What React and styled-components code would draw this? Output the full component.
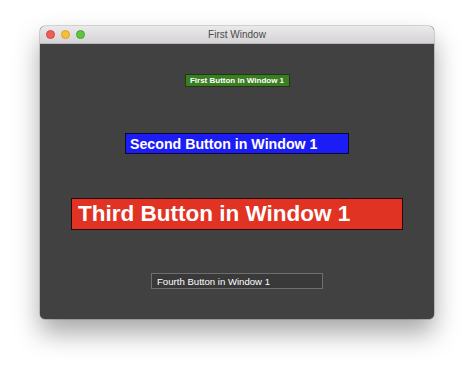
import React from "react";
import styled, { createGlobalStyle } from "styled-components";

const GlobalStyle = createGlobalStyle`
  html, body {
    margin: 0;
    padding: 0;
    background: #ffffff;
    font-family: "Liberation Sans", Arial, sans-serif;
  }
`;

const buttons = [
  { label: "First Button in Window 1", kind: "green" },
  { label: "Second Button in Window 1", kind: "blue" },
  { label: "Third Button in Window 1", kind: "red" },
  { label: "Fourth Button in Window 1", kind: "plain" },
];

export default function App() {
  return (
    <Page>
      <GlobalStyle />
      <Window>
        <TitleBar>
          <Lights>
            <Light color="#ed5f56" edge="#d2473f" />
            <Light color="#f6bd3b" edge="#d9a02a" />
            <Light color="#5ec443" edge="#47a631" />
          </Lights>
          <Title>First Window</Title>
        </TitleBar>
        <Content>
          {buttons.map((b) => (
            <Button key={b.label} kind={b.kind}>
              {b.label}
            </Button>
          ))}
        </Content>
      </Window>
    </Page>
  );
}

const Page = styled.div`
  width: 474px;
  height: 372px;
  display: flex;
  justify-content: center;
  align-items: flex-start;
  padding-top: 26px;
  box-sizing: border-box;
  overflow: hidden;
`;

const Window = styled.div`
  width: 394px;
  height: 293px;
  border-radius: 5px;
  overflow: hidden;
  display: flex;
  flex-direction: column;
  background: #414141;
  box-shadow: 0 14px 26px rgba(0, 0, 0, 0.35), 0 0 0 0.5px rgba(0, 0, 0, 0.3);
`;

const TitleBar = styled.div`
  position: relative;
  height: 17px;
  flex-shrink: 0;
  display: flex;
  align-items: center;
  justify-content: center;
  background: linear-gradient(#ebe9eb, #d5d3d5);
  border-bottom: 1px solid #b8b6b8;
`;

const Lights = styled.div`
  position: absolute;
  left: 6px;
  top: 4px;
  display: flex;
  gap: 6px;
`;

const Light = styled.span`
  box-sizing: border-box;
  width: 9px;
  height: 9px;
  border-radius: 50%;
  background: ${(p) => p.color};
  border: 0.5px solid ${(p) => p.edge};
`;

const Title = styled.div`
  font-size: 10px;
  color: #4a4a4a;
  font-family: "Liberation Sans", Arial, sans-serif;
`;

const Content = styled.div`
  flex: 1;
  display: flex;
  flex-direction: column;
  align-items: center;
  padding-top: 30px;
`;

const styles = {
  green: `
    width: 105px; height: 13px; margin-bottom: 46px;
    background: #3b7d21; border: 1px solid #1d3a10;
    font-size: 8px; font-weight: bold; justify-content: center;
  `,
  blue: `
    width: 224px; height: 21px; margin-bottom: 44px;
    background: #1c1cf5; border: 1px solid #0a0a30;
    font-size: 14.2px; font-weight: bold; padding-left: 4px;
  `,
  red: `
    width: 332px; height: 32px; margin-bottom: 43px;
    background: #e13324; border: 1px solid #2a0a06;
    font-size: 22.5px; font-weight: bold; padding-left: 6px;
  `,
  plain: `
    width: 172px; height: 16px;
    background: #393939; border: 1px solid #6e6e6e;
    font-size: 9.6px; padding-left: 5px;
  `,
};

const Button = styled.div`
  box-sizing: border-box;
  display: flex;
  align-items: center;
  color: #ffffff;
  font-family: "Liberation Sans", Arial, sans-serif;
  white-space: nowrap;
  ${(p) => styles[p.kind]}
`;
